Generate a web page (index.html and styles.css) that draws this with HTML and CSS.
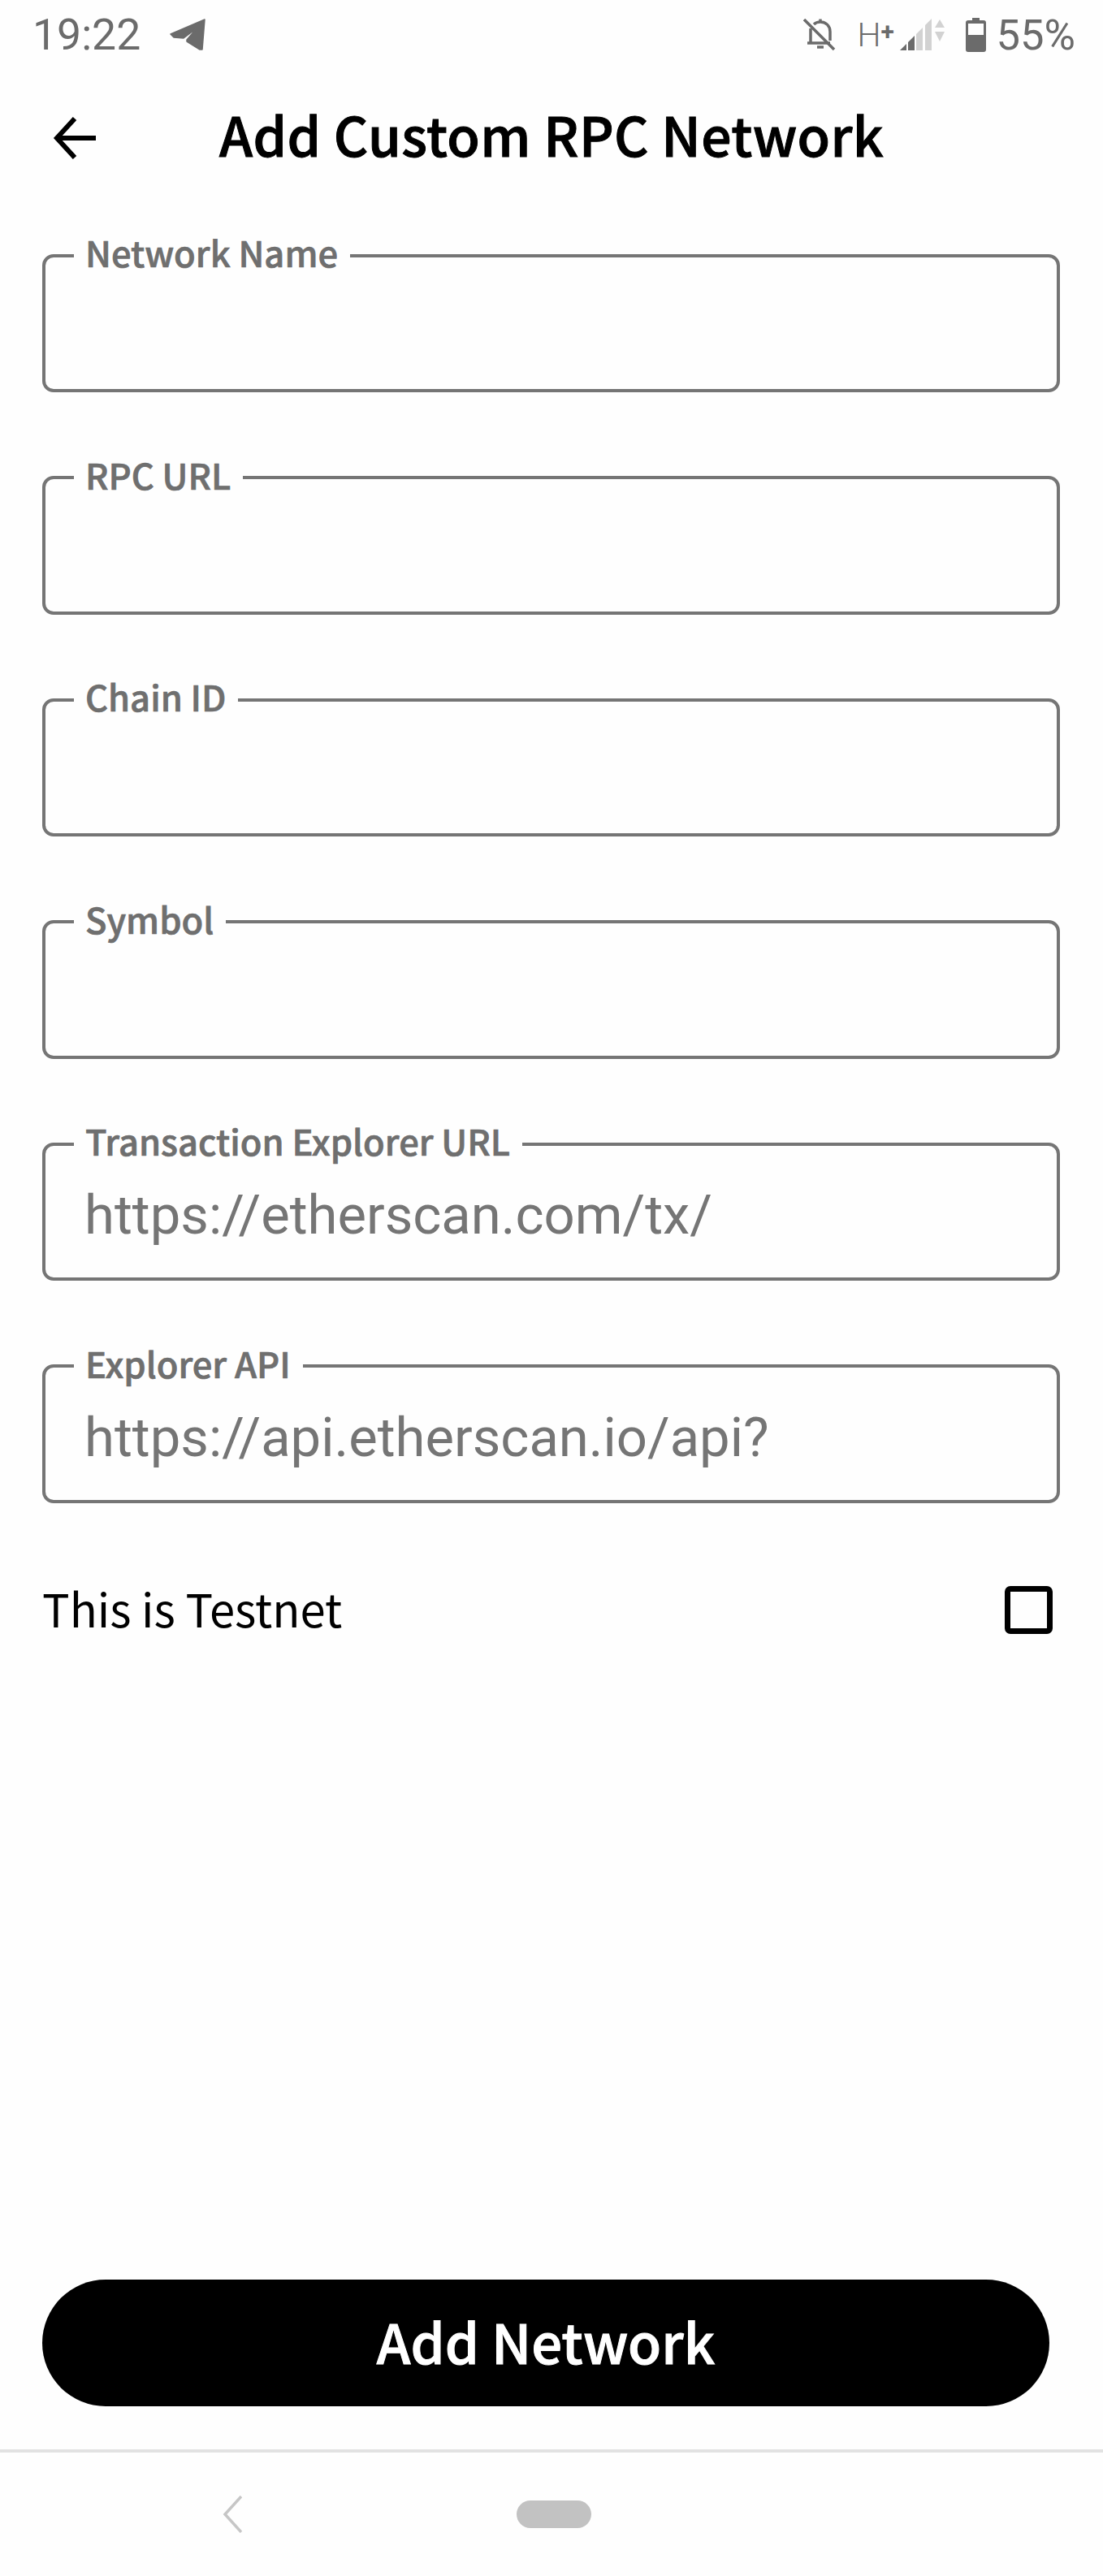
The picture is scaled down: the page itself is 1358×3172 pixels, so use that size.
FILE: index.html
```html
<!DOCTYPE html>
<html lang="en">
<head>
    <meta charset="UTF-8">
    <meta name="viewport" content="width=device-width, initial-scale=1.0">
    <title>Add Custom RPC Network</title>
    <link rel="stylesheet" href="styles.css">
</head>
<body>
    <div class="status-bar">
        <div class="status-left">
            <span class="status-time">19:22</span>
            <svg class="icon-telegram" width="44" height="40" viewBox="0 0 44 40">
                <path d="M43 1 L40 38 L37 38 L21 28 L21 26 L33 12 L17 24 L5 23 L1 19 Z" fill="#6b6b6b" stroke="#6b6b6b" stroke-width="1.5" stroke-linejoin="round"/>
            </svg>
        </div>
        <div class="status-right">
            <svg class="icon-bell" width="40" height="40" viewBox="0 0 40 40" fill="none" stroke="#6b6b6b" stroke-width="3.5">
                <path d="M1 1 L38 38"/>
                <path d="M13 7 C16 4 18 4 21 4 C28 4 33 9 33 16 V27"/>
                <path d="M9 12 V30 H5 M9 30 H33"/>
                <path d="M21 0.5 V4"/>
                <path d="M17 35 H25"/>
            </svg>
            <span class="status-network">H<span class="status-plus">+</span></span>
            <svg class="icon-signal" width="56" height="40" viewBox="0 0 56 40">
                <polygon points="0,39 8,39 8,31" fill="#6b6b6b"/>
                <polygon points="10,39 18,39 18,21 10,29" fill="#6b6b6b"/>
                <polygon points="20,39 28,39 28,11 20,19" fill="#d2d2d2"/>
                <polygon points="31,39 39,39 39,0 31,8" fill="#d2d2d2"/>
                <polygon points="43,11 55,11 49,1" fill="#d2d2d2"/>
                <polygon points="43,16 55,16 49,28" fill="#d2d2d2"/>
            </svg>
            <svg class="icon-battery" width="25" height="42" viewBox="0 0 25 42">
                <path d="M8 0 H17 V3 H22 Q25 3 25 6 V39 Q25 42 22 42 H3 Q0 42 0 39 V6 Q0 3 3 3 H8 Z M3 7 V21 H22 V7 Z" fill="#6b6b6b" fill-rule="evenodd"/>
            </svg>
            <span class="status-battery">55%</span>
        </div>
    </div>

    <div class="header">
        <svg class="icon-back" width="54" height="52" viewBox="0 0 54 52" fill="none" stroke="#000" stroke-width="6">
            <path d="M27 2 L5 26 L27 50"/>
            <path d="M5 26 H53"/>
        </svg>
        <h1>Add Custom RPC Network</h1>
    </div>

    <form class="form">
        <fieldset class="field">
            <legend>Network Name</legend>
            <div class="field-value"></div>
        </fieldset>
        <fieldset class="field">
            <legend>RPC URL</legend>
            <div class="field-value"></div>
        </fieldset>
        <fieldset class="field">
            <legend>Chain ID</legend>
            <div class="field-value"></div>
        </fieldset>
        <fieldset class="field">
            <legend>Symbol</legend>
            <div class="field-value"></div>
        </fieldset>
        <fieldset class="field">
            <legend>Transaction Explorer URL</legend>
            <div class="field-value">https://etherscan.com/tx/</div>
        </fieldset>
        <fieldset class="field">
            <legend>Explorer API</legend>
            <div class="field-value">https://api.etherscan.io/api?</div>
        </fieldset>
    </form>

    <div class="testnet-row">
        <span class="testnet-label">This is Testnet</span>
        <div class="checkbox"></div>
    </div>

    <button class="add-button" type="button">Add Network</button>

    <div class="nav-bar">
        <svg class="nav-back" width="24" height="46" viewBox="0 0 24 46" fill="none" stroke="#c6c6c6" stroke-width="3.5">
            <path d="M23 1 L3 23 L23 45"/>
        </svg>
        <div class="nav-home"></div>
    </div>
</body>
</html>
```

FILE: styles.css
```css
/* General Reset */
* {
    margin: 0;
    padding: 0;
    box-sizing: border-box;
}

body {
    width: 1358px;
    height: 3172px;
    display: flex;
    flex-direction: column;
    overflow: hidden;
    background-color: #fefefe;
    font-family: 'Noto Sans CJK JP', 'Noto Sans', sans-serif;
}

/* Status bar */
.status-bar {
    height: 86px;
    padding: 0 34px 0 40px;
    display: flex;
    justify-content: space-between;
    align-items: center;
    color: #6b6b6b;
    font-family: 'Roboto', sans-serif;
    font-size: 52.5px;
}

.status-left,
.status-right {
    display: flex;
    align-items: center;
}

.status-time {
    font-size: 53.5px;
    line-height: 86px;
}

.icon-telegram {
    margin-left: 36px;
}

.icon-bell {
    margin-right: 27px;
}

.status-network {
    width: 41px;
    margin-right: 11px;
    font-size: 41px;
    font-weight: 300;
    white-space: nowrap;
}

.status-plus {
    font-size: 30px;
    font-weight: 700;
    vertical-align: 8px;
}

.icon-signal {
    margin-right: 25px;
}

.status-battery {
    margin-left: 13px;
}

/* Header */
.header {
    height: 168px;
    padding-left: 65px;
    display: flex;
    align-items: center;
}

.icon-back {
    flex-shrink: 0;
}

/* medium comes out a bit thin here, so a thin stroke on top */
.header h1 {
    margin-left: 151px;
    padding-bottom: 12px;
    font-size: 66px;
    font-weight: 500;
    letter-spacing: 0.4px;
    -webkit-text-stroke: 1px #000000;
    color: #000000;
    white-space: nowrap;
}

/* Form */
.form {
    margin-top: 31px;
    padding: 0 53px 0 52px;
    display: flex;
    flex-direction: column;
    gap: 75.6px;
}

.field {
    height: 198px;
    border: 4px solid #757575;
    border-radius: 14px;
}

.field legend {
    margin-left: 35px;
    padding: 0 15px 7px 14px;
    font-size: 43.5px;
    font-weight: 500;
    -webkit-text-stroke: 0.7px #6f6f6f;
    line-height: 52px;
    color: #6f6f6f;
    white-space: nowrap;
}

.field-value {
    padding: 18px 0 0 48px;
    font-family: 'Roboto', sans-serif;
    font-size: 67px;
    line-height: 80px;
    color: #757575;
    white-space: nowrap;
}

/* Testnet row */
.testnet-row {
    margin-top: 88px;
    padding: 0 62px 0 52px;
    display: flex;
    justify-content: space-between;
    align-items: center;
    font-size: 56.2px;
    color: #000000;
}

.testnet-label {
    padding-bottom: 6px;
}

.checkbox {
    width: 59px;
    height: 59px;
    border: 7px solid #000000;
    border-radius: 7px;
}

/* Bottom */
.add-button {
    width: 1240px;
    height: 156px;
    margin: auto 0 53px 52px;
    padding-bottom: 8px;
    border: none;
    border-radius: 78px;
    background-color: #000000;
    color: #ffffff;
    font-family: inherit;
    font-size: 67px;
    font-weight: 500;
    -webkit-text-stroke: 1px #ffffff;
}

.nav-bar {
    height: 156px;
    border-top: 4px solid #e2e2e2;
    display: flex;
    align-items: center;
    padding-left: 274px;
}

.nav-home {
    width: 92px;
    height: 34px;
    margin-left: 338px;
    border-radius: 17px;
    background-color: #c2c2c2;
}
```
